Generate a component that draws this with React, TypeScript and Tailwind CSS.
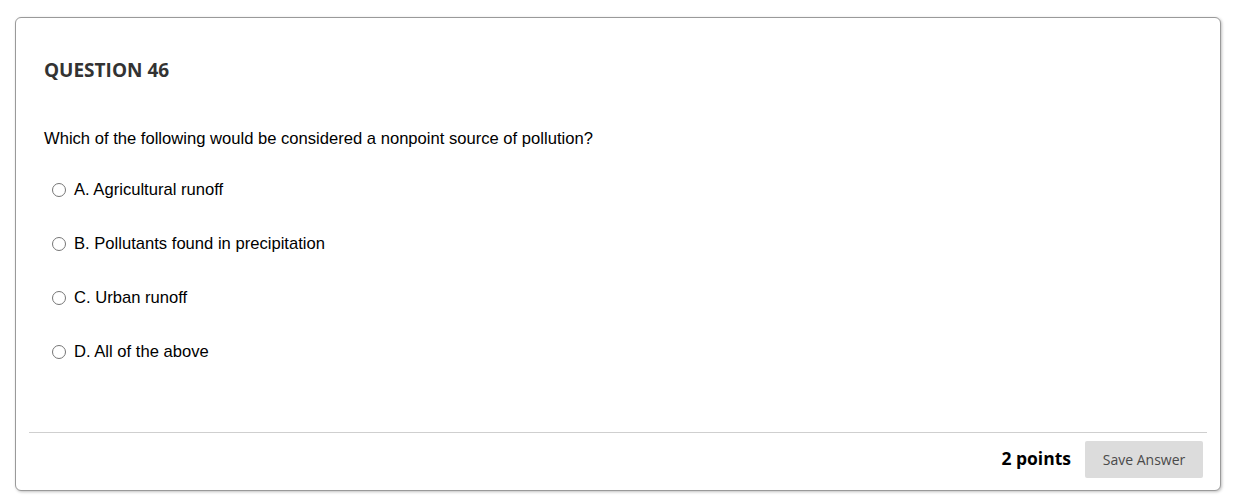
const options = [
  "A. Agricultural runoff",
  "B. Pollutants found in precipitation",
  "C. Urban runoff",
  "D. All of the above",
];

export default function App() {
  return (
    <div className="min-h-[501px] bg-white pl-[15px] pr-[19px] pt-[17px]">
      <div className="h-[474px] flex flex-col rounded-[6px] border border-[#9a9a9a] bg-white shadow-[1px_1px_3px_rgba(0,0,0,0.25)]">
        <div className="flex-1 px-[28px] pt-[40px]">
          <h2 className="text-[19px] font-bold leading-[24px] text-[#333333] [font-family:'Open_Sans',sans-serif]">
            QUESTION 46
          </h2>
          <p className="mt-[47px] text-[16.6px] leading-[20px] text-black [font-family:'Liberation_Sans',Arial,sans-serif]">
            Which of the following would be considered a nonpoint source of pollution?
          </p>
          <div className="mt-[31px] flex flex-col gap-[34px] pl-[8px]">
            {options.map((o) => (
              <label key={o} className="flex h-[20px] items-center gap-[8px] text-[16.6px] text-black [font-family:'Liberation_Sans',Arial,sans-serif]">
                <span className="h-[14px] w-[14px] rounded-full border border-[#767676] bg-white" />
                <span>{o}</span>
              </label>
            ))}
          </div>
        </div>
        <div className="mx-[13px] border-t border-[#cfcfcf]" />
        <div className="flex h-[57px] items-start justify-end gap-[14px] pr-[17px] pt-[8px]">
          <span className="mt-[3px] text-[17.5px] font-bold leading-[28px] text-black [font-family:'Open_Sans',sans-serif]">2 points</span>
          <button className="h-[37px] w-[118px] rounded-[2px] bg-[#dcdcdc] text-[14px] text-[#4a4a4a] [font-family:'Open_Sans',sans-serif]">
            Save Answer
          </button>
        </div>
      </div>
    </div>
  );
}
